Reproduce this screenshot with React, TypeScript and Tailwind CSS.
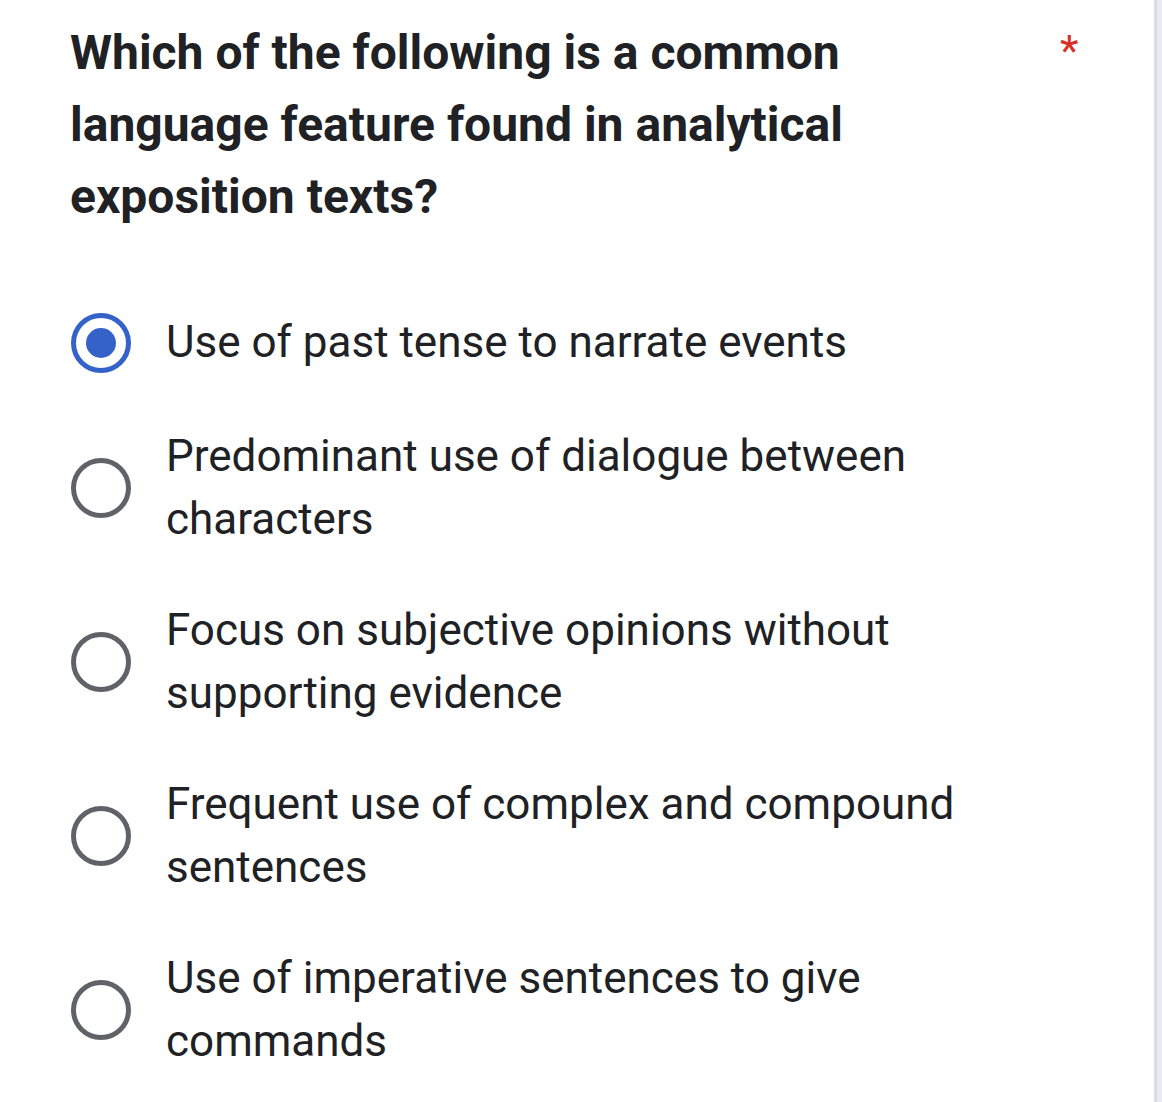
import React from "react";

const options = [
  "Use of past tense to narrate events",
  "Predominant use of dialogue between characters",
  "Focus on subjective opinions without supporting evidence",
  "Frequent use of complex and compound sentences",
  "Use of imperative sentences to give commands",
];

export default function App() {
  const selected = 0;
  return (
    <div className="w-[1162px] h-[1102px] bg-[#e8eaf6] overflow-hidden" style={{ fontFamily: "Roboto, 'Noto Sans', sans-serif" }}>
      <div className="w-[1157px] h-full bg-white border-r-[3px] border-[#dadce0] pl-[70px] pt-[17px]">
        <div className="flex">
          <h1 className="w-[860px] text-[48px] leading-[72px] font-bold text-[#202124]">
            Which of the following is a common language feature found in analytical exposition texts?
          </h1>
          <span className="ml-[130px] mt-[13px] text-[43px] leading-[40px] text-[#d93025]">*</span>
        </div>
        <div className="mt-[78px] flex flex-col gap-[48px]">
          {options.map((o, i) => (
            <div key={i} className={i === 0 ? "flex items-center mb-[3px]" : "flex items-center"}>
              <div
                className={
                  i === selected
                    ? "w-[60px] h-[60px] shrink-0 rounded-full border-[5px] border-[#3462c9] flex items-center justify-center ml-[1px]"
                    : "w-[60px] h-[60px] shrink-0 rounded-full border-[5px] border-[#5f6368] ml-[1px]"
                }
              >
                {i === selected && <div className="w-[30px] h-[30px] rounded-full bg-[#3462c9]" />}
              </div>
              <div className="ml-[35px] w-[850px] text-[44px] leading-[63px] text-[#202124]">{o}</div>
            </div>
          ))}
        </div>
      </div>
    </div>
  );
}
